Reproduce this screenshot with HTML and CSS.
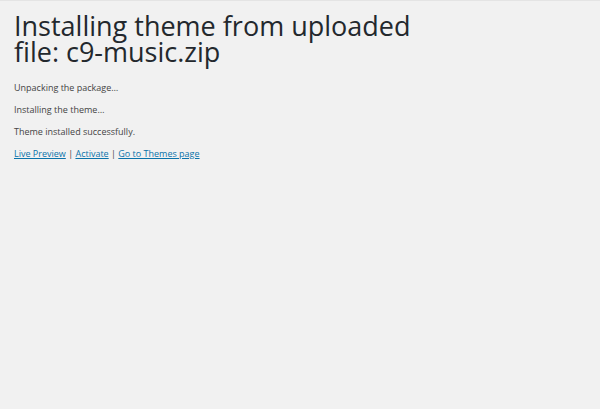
FILE: index.html
```html
<!DOCTYPE html>
<html>
<head>
<meta charset="utf-8">
<link rel="stylesheet" href="styles.css">
</head>
<body>
<div class="wrap">
  <h1 class="title">Installing theme from uploaded<br>file: c9-music.zip</h1>
  <p class="msg">Unpacking the package…</p>
  <p class="msg">Installing the theme…</p>
  <p class="msg">Theme installed successfully.</p>
  <p class="msg actions"><a href="#">Live Preview</a> | <a href="#">Activate</a> | <a href="#">Go to Themes page</a></p>
</div>
</body>
</html>
```
FILE: styles.css
```css
html, body {
  margin: 0;
  padding: 0;
  background: #f1f1f1;
  height: 100%;
}
body {
  border-top: 1px solid #e4e4e4;
  box-sizing: border-box;
  font-family: "Open Sans", Lato, sans-serif;
}
.wrap {
  padding: 12px 14px;
}
.title {
  margin: 0 0 17px;
  font-weight: 400;
  font-size: 27px;
  line-height: 26px;
  color: #23282d;
  letter-spacing: 0;
}
.msg {
  margin: 0 0 11px;
  font-size: 9px;
  line-height: 11px;
  color: #444;
}
.actions a {
  color: #0a73aa;
}
```
